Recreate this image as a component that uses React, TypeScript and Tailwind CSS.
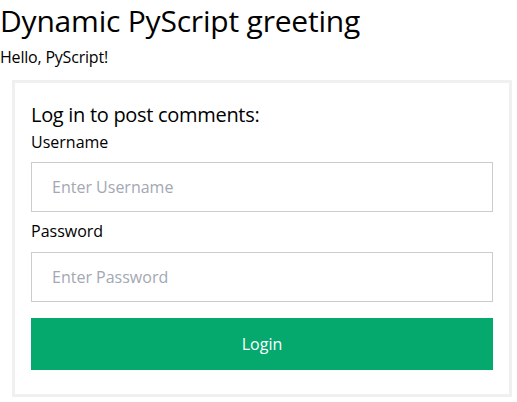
import React, { useState } from 'react';

const App = () => {
  const [user, setUser] = useState('');
  const [pass, setPass] = useState('');

  return (
    <div className="bg-white text-black min-h-screen" style={{ fontFamily: '"Open Sans", "Liberation Sans", sans-serif' }}>
      <h1 className="text-[30px] leading-[41px] tracking-[-0.2px] font-normal">Dynamic PyScript greeting</h1>
      <p className="mt-[4px] text-[16px] leading-[24px] tracking-[-0.2px]">Hello, PyScript!</p>
      <div className="ml-[12px] mt-[11px] w-[500px] border-[3px] border-[#f0f0f0] px-4 pt-[18px] pb-6">
        <h2 className="text-[20px] leading-[28px] tracking-[-0.3px]">Log in to post comments:</h2>
        <label className="block mt-[1px] text-[16px] leading-[24px]">Username</label>
        <input
          className="block mt-[8px] w-full h-[50px] border border-[#cccccc] px-5 text-[16px] outline-none placeholder:text-[#a3a8b3]"
          placeholder="Enter Username"
          value={user}
          onChange={e => setUser(e.target.value)}
        />
        <label className="block mt-[7px] text-[16px] leading-[24px]">Password</label>
        <input
          type="password"
          className="block mt-[9px] w-full h-[50px] border border-[#cccccc] px-5 text-[16px] outline-none placeholder:text-[#a3a8b3]"
          placeholder="Enter Password"
          value={pass}
          onChange={e => setPass(e.target.value)}
        />
        <button className="block mt-[16px] w-full h-[52px] bg-[#05a86d] text-white text-[16px]">Login</button>
      </div>
    </div>
  );
};

export default App;
